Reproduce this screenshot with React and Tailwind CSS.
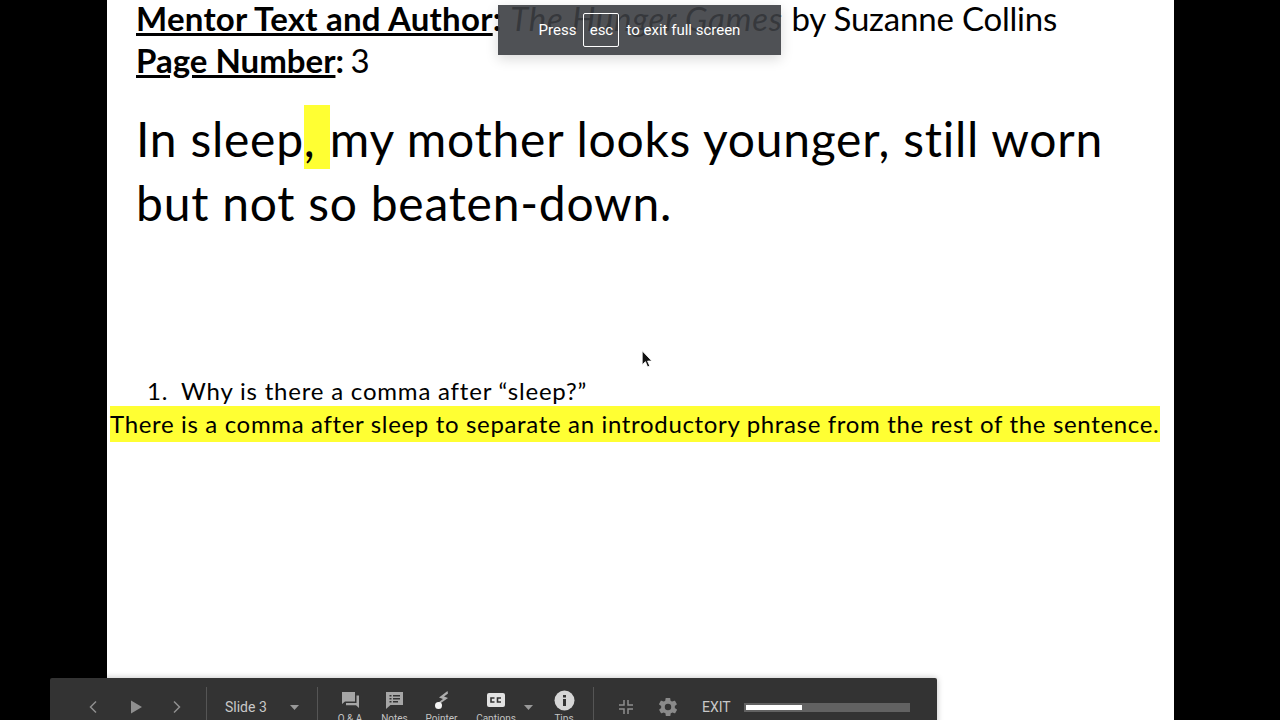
import React from 'react';

const Divider = () => <div className="w-px h-[33px] mt-[9px] bg-[#555555] shrink-0" />;

const Caret = ({ className }) => (
    <svg className={className} width="9" height="5" viewBox="0 0 9 5"><path d="M0 0h9L4.500 5z" fill="#999999" /></svg>
);

const ToolButton = ({ label, width, children }) => (
    <div className="flex flex-col items-center shrink-0" style={{ width }}>
        <div className="h-[24px] mt-[10px] flex items-center justify-center">{children}</div>
        <span className="text-[10px] leading-[12px] mt-[1px] text-[#c4c4c4] whitespace-nowrap">{label}</span>
    </div>
);

const Toolbar = () => (
    <div className="absolute left-[50px] top-[678px] w-[887px] h-[60px] bg-[#333333] rounded-t-[2px] flex shadow-[0_0_6px_rgba(0,0,0,0.25)] font-['Roboto',sans-serif]">
        <div className="w-[156px] h-[58px] flex items-center shrink-0 pl-[37px]">
            <svg width="12" height="14" viewBox="0 0 12 14"><path d="M9 1.500L3.500 7 9 12.500" fill="none" stroke="#8f8f8f" strokeWidth="1.500" /></svg>
            <svg width="12" height="14" viewBox="0 0 12 14" className="ml-[31px]"><path d="M1 0.500L12 7 1 13.500z" fill="#8f8f8f" /></svg>
            <svg width="12" height="14" viewBox="0 0 12 14" className="ml-[29px]"><path d="M3 1.500L8.500 7 3 12.500" fill="none" stroke="#8f8f8f" strokeWidth="1.500" /></svg>
        </div>
        <Divider />
        <div className="w-[110px] h-[58px] flex items-center shrink-0 pl-[18px] text-[14px] text-[#c8c8c8]">
            <span>Slide 3</span>
            <Caret className="ml-[23px]" />
        </div>
        <Divider />
        <div className="flex pl-[11px] w-[275px] shrink-0">
            <ToolButton label="Q & A" width="42px">
                <svg width="17" height="16" viewBox="0 0 17 16"><path d="M0 0h13v9.500H3L0 12z" fill="#a6a6a6" /><path d="M14.500 3.500H17V16l-3-2.800H4V11h10.500z" fill="#a6a6a6" /></svg>
            </ToolButton>
            <ToolButton label="Notes" width="47px">
                <svg width="17" height="17" viewBox="0 0 17 17"><path fillRule="evenodd" d="M0 0h17v13H4.500L0 17zM3.500 3v1.500h2V3zm3.500 0v1.500h7V3zM3.500 6v1.500h2V6zM7 6v1.500h7V6zM3.500 9v1.500h2V9zM7 9v1.500h5V9z" fill="#a6a6a6" /></svg>
            </ToolButton>
            <ToolButton label="Pointer" width="47px">
                <svg width="14" height="19" viewBox="0 0 14 19"><path d="M12.500 0L4 6.500l4 1.500-4.500 3.500 1 1.500L13 7 9 5.500l4-3z" fill="#adadad" /><circle cx="3.500" cy="14.500" r="3.500" fill="#f4f4f4" /></svg>
            </ToolButton>
            <ToolButton label="Captions" width="62px">
                <svg width="18" height="14" viewBox="0 0 18 14"><rect width="18" height="14" rx="2" fill="#e2e2e2" /><path d="M7.500 5H4v4h3.500M14 5h-3.500v4H14" fill="none" stroke="#333333" strokeWidth="1.600" /></svg>
            </ToolButton>
            <Caret className="mt-[27px] -ml-[3px] shrink-0" />
            <ToolButton label="Tips" width="62px">
                <svg width="21" height="21" viewBox="0 0 21 21"><circle cx="10.500" cy="10.500" r="10" fill="#d6d6d6" /><rect x="9" y="9" width="3" height="7" fill="#333333" /><rect x="9" y="5" width="3" height="2.500" fill="#333333" /></svg>
            </ToolButton>
        </div>
        <Divider />
        <div className="h-[58px] flex items-center shrink-0 pl-[25px]">
            <svg width="14" height="14" viewBox="0 0 14 14"><path d="M5 0v5H0M9 0v5h5M5 14V9H0M9 14V9h5" fill="none" stroke="#8f8f8f" strokeWidth="1.500" /></svg>
            <svg width="22" height="22" viewBox="0 0 24 24" className="ml-[24px]"><path fill="#8a8a8a" d="M19.400 13c.1-.3.100-.7.100-1s0-.7-.1-1l2.100-1.600c.2-.2.200-.4.100-.6l-2-3.500c-.1-.2-.4-.3-.6-.2l-2.500 1c-.5-.4-1.100-.7-1.700-1l-.4-2.600c0-.2-.2-.4-.5-.4h-4c-.2 0-.4.200-.5.400l-.4 2.600c-.6.300-1.200.600-1.700 1l-2.500-1c-.2-.1-.5 0-.6.200l-2 3.500c-.1.200-.1.500.1.600L4.600 11c0 .3-.1.700-.1 1s0 .7.100 1l-2.100 1.600c-.2.200-.2.400-.1.600l2 3.500c.1.200.4.300.6.200l2.500-1c.5.400 1.100.7 1.700 1l.4 2.600c0 .2.200.4.500.4h4c.2 0 .4-.2.500-.4l.4-2.600c.6-.3 1.200-.6 1.700-1l2.500 1c.2.100.5 0 .6-.2l2-3.500c.1-.2.100-.5-.1-.6zM12 15.500a3.500 3.500 0 1 1 0-7 3.500 3.500 0 0 1 0 7z" /></svg>
            <span className="ml-[23px] text-[14px] text-[#c8c8c8]">EXIT</span>
            <div className="ml-[13px] w-[166px] h-[9px] bg-[#626262] p-[2px]">
                <div className="h-full w-[56px] bg-white" />
            </div>
        </div>
    </div>
);

const Cursor = () => (
    <svg className="absolute left-[640px] top-[349px]" width="13" height="22" viewBox="0 0 12 20">
        <path d="M2 1.500v13l3-3 2 5 2-1-2-4.500h4z" fill="#111111" stroke="#ffffff" strokeWidth="0.800" />
    </svg>
);

const FullscreenNotice = () => (
    <div className="absolute left-[498px] top-[5px] w-[283px] h-[50px] bg-[#3c3e42]/90 shadow-[0_4px_12px_rgba(0,0,0,0.15)] flex items-center justify-center text-white text-[15px] font-['Roboto',sans-serif]">
        <span>Press</span>
        <span className="mx-[7px] w-[36px] h-[34px] border border-white rounded-[2px] flex items-center justify-center">esc</span>
        <span>to exit full screen</span>
    </div>
);

export default function App() {
    return (
        <div className="relative h-[720px] w-[1280px] overflow-hidden bg-black font-['Lato',sans-serif]">
            <div className="ml-[107px] w-[1067px] h-[720px] bg-white text-black flex flex-col">
                {/* slide header */}
                <div className="pl-[29px] text-[33px] whitespace-nowrap">
                    <p className="leading-[36px] tracking-[0.24px]">
                        <b className="underline">Mentor Text and Author</b><b>:</b>{' '}
                        <i className="tracking-[0.74px]">The Hunger Games</i>{' '}
                        <span className="tracking-[-0.2px]">by Suzanne Collins</span>
                    </p>
                    <p className="mt-[3px] leading-[42px]">
                        <b className="underline">Page Number</b><b>:</b> <span className="ml-[-2px]">3</span>
                    </p>
                </div>
                {/* sentence */}
                <div className="pl-[29px] mt-[24px] text-[48px] leading-[64px] tracking-[0.75px] whitespace-nowrap">
                    <p>
                        In sleep<span className="bg-[#ffff33] inline-block h-[64px] leading-[68px] w-[26px]">,</span>my mother looks younger, still worn
                    </p>
                    <p>but not so beaten-down.</p>
                </div>
                {/* question */}
                <div className="pl-[40px] mt-[140px] text-[24px] leading-[32px] tracking-[0.8px] whitespace-nowrap flex">
                    <span className="w-[34px]">1.</span>
                    <span>Why is there a comma after “sleep?”</span>
                </div>
                <div className="ml-[3px] mt-[-1px] w-[1050px] h-[36px] bg-[#ffff33] text-[24px] leading-[36px] tracking-[0.66px] whitespace-nowrap">
                    There is a comma after sleep to separate an introductory phrase from the rest of the sentence.
                </div>
            </div>
            <FullscreenNotice />
            <Cursor />
            <Toolbar />
        </div>
    );
}
